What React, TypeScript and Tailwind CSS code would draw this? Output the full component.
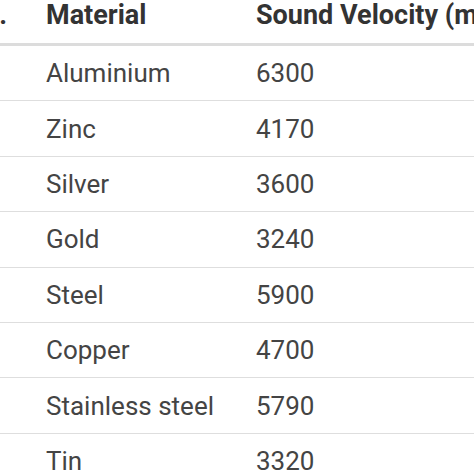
const rows: [string, string, string][] = [
  ['1', 'Aluminium', '6300'],
  ['2', 'Zinc', '4170'],
  ['3', 'Silver', '3600'],
  ['4', 'Gold', '3240'],
  ['5', 'Steel', '5900'],
  ['6', 'Copper', '4700'],
  ['7', 'Stainless steel', '5790'],
  ['8', 'Tin', '3320'],
];

export default function App() {
  return (
    <div
      className="w-[474px] h-[474px] overflow-hidden bg-white"
      style={{ fontFamily: 'Roboto, "Noto Sans", sans-serif' }}
    >
      <div className="w-[640px] -ml-[32px] -mt-[12px] text-[26px] leading-none">
        {/* header row */}
        <div className="grid grid-cols-[78px_210px_1fr] items-center h-[58px] border-b-[3px] border-[#dcdcdc] text-[27px] font-bold text-[#333333]">
          <div className="flex justify-end pr-[39px] whitespace-nowrap">
            <span>No.</span>
          </div>
          <div>Material</div>
          <div className="whitespace-nowrap">Sound Velocity (m/s)</div>
        </div>
        {rows.map(([no, name, v]) => (
          <div
            key={no}
            className="grid grid-cols-[78px_210px_1fr] items-center h-[55.4px] border-b-[1.5px] border-[#dedede] text-[#444444]"
          >
            <div className="flex justify-end pr-[60px]">
              <span>{no}</span>
            </div>
            <div className="whitespace-nowrap">{name}</div>
            <div>{v}</div>
          </div>
        ))}
      </div>
    </div>
  );
}
